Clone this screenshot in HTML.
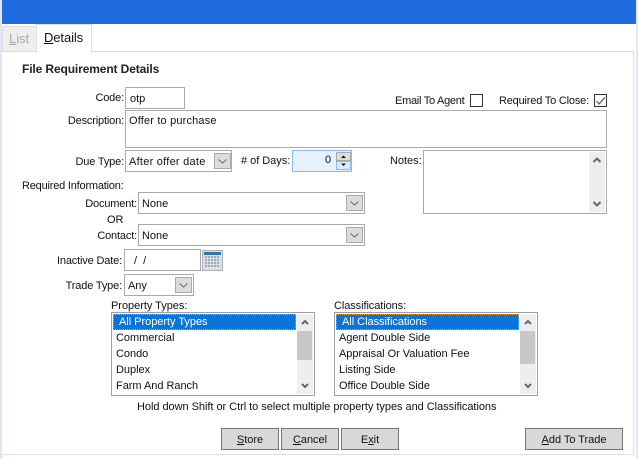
<!DOCTYPE html>
<html><head><meta charset="utf-8"><style>
html,body{margin:0;padding:0;background:#fff}
#p{position:relative;width:638px;height:459px;overflow:hidden;background:#fff;font:11px/14px "Liberation Sans",sans-serif;letter-spacing:-.03px;color:#111}
#p div{position:absolute;box-sizing:border-box}
.t{white-space:nowrap}
.r{text-align:right;letter-spacing:-.16px}
.b{border:1px solid #aaaaae;background:#fff}
.ar{background:#dcdcdc;border:1px solid #aaa;width:17px;height:16px}
.btn{background:#d8d8d8;border:1px solid #777;height:22px;text-align:center;line-height:22px}
.sel{background:#0a74da;color:#fff;outline:1px dotted #e8a040;outline-offset:-1px;height:16px;line-height:16px}
svg{position:absolute;display:block}
</style></head><body><div id="p">
<div style="left:0;top:0;width:2px;height:459px;background:#dfe5f2"></div>
<div style="left:636px;top:0;width:2px;height:459px;background:#dfe9f6"></div>
<div style="left:2px;top:0;width:634px;height:24px;background:#1f6bdd"></div>

<div style="left:2px;top:51px;width:632px;height:404px;border-right:1px solid #ddd;border-top:1px solid #ddd;border-bottom:1px solid #e2e2e2"></div>
<div style="left:2px;top:26px;width:35px;height:26px;background:#eee;border:1px solid #ddd"></div>
<div class="t" style="left:9px;top:32px;color:#a8a8a8;font-size:13px"><u>L</u>ist</div>
<div style="left:36px;top:24px;width:56px;height:29px;background:#fff;border:1px solid #ddd;border-bottom:0"></div>
<div class="t" style="left:44px;top:31px;font-size:13px;letter-spacing:-.1px"><u>D</u>etails</div>

<div class="t" style="left:22px;top:62px;font-size:12px;font-weight:bold;letter-spacing:-.12px;color:#222">File Requirement Details</div>

<div class="t r" style="left:60px;width:64px;top:91px">Code:</div>
<div class="b" style="left:125px;top:87px;width:60px;height:22px"></div>
<div class="t" style="left:130px;top:92px">otp</div>
<div class="t" style="left:395px;top:94px;letter-spacing:-.27px">Email To Agent</div>
<div style="left:470px;top:94px;width:13px;height:13px;border:1px solid #333"></div>
<div class="t" style="left:499px;top:94px;letter-spacing:-.19px">Required To Close:</div>
<div style="left:594px;top:94px;width:13px;height:13px;border:1px solid #333"></div>
<svg style="left:594px;top:94px" width="13" height="13"><path d="M2.5 7 L5 10 L11 3.5" fill="none" stroke="#666" stroke-width="1.3"/></svg>

<div class="t r" style="left:40px;width:84px;top:114px">Description:</div>
<div class="b" style="left:125px;top:110px;width:482px;height:38px"></div>
<div class="t" style="left:129px;top:114px;letter-spacing:.17px">Offer to purchase</div>

<div class="t r" style="left:60px;width:64px;top:155px">Due Type:</div>
<div class="b" style="left:125px;top:150px;width:107px;height:22px"></div>
<div class="t" style="left:129px;top:155px;letter-spacing:.25px">After offer date</div>
<div class="ar" style="left:214px;top:153px"></div>
<svg style="left:214px;top:153px" width="17" height="16"><path d="M4.5 6.5 L8.5 10 L12.5 6.5" fill="none" stroke="#666"/></svg>

<div class="t" style="left:241px;top:154px"># of Days:</div>
<div style="left:292px;top:150px;width:60px;height:22px;background:#e6f1fb;border:1px solid #85bdf0"></div>
<div class="t" style="left:325px;top:153px">0</div>
<div style="left:336px;top:152px;width:15px;height:9px;background:#dcdcdc;border:1px solid #aaa"></div>
<div style="left:336px;top:161px;width:15px;height:9px;background:#dcebf9;border:1px solid #85bdf0"></div>
<svg style="left:336px;top:152px" width="15" height="18"><path d="M5 6 H10 L7.5 3.5 Z M5 11.5 H10 L7.5 14 Z" fill="#111"/></svg>

<div class="t" style="left:390px;top:154px">Notes:</div>
<div class="b" style="left:423px;top:150px;width:184px;height:64px"></div>
<div style="left:589px;top:152px;width:16px;height:60px;background:#eee"></div>
<svg style="left:589px;top:152px" width="16" height="60"><path d="M4.5 10 L8 6.5 L11.5 10 M4.5 50 L8 53.5 L11.5 50" fill="none" stroke="#666" stroke-width="2"/></svg>

<div class="t" style="left:22px;top:179px;letter-spacing:-.2px">Required Information:</div>
<div class="t r" style="left:60px;width:77px;top:197px">Document:</div>
<div class="b" style="left:138px;top:192px;width:227px;height:22px"></div>
<div class="t" style="left:142px;top:197px">None</div>
<div class="ar" style="left:346px;top:195px"></div>
<svg style="left:346px;top:195px" width="17" height="16"><path d="M4.5 6.5 L8.5 10 L12.5 6.5" fill="none" stroke="#666"/></svg>
<div class="t" style="left:107px;top:213px">OR</div>
<div class="t r" style="left:60px;width:77px;top:229px">Contact:</div>
<div class="b" style="left:138px;top:224px;width:227px;height:22px"></div>
<div class="t" style="left:142px;top:229px">None</div>
<div class="ar" style="left:346px;top:227px"></div>
<svg style="left:346px;top:227px" width="17" height="16"><path d="M4.5 6.5 L8.5 10 L12.5 6.5" fill="none" stroke="#666"/></svg>

<div class="t r" style="left:40px;width:82px;top:254px">Inactive Date:</div>
<div class="b" style="left:124px;top:249px;width:77px;height:22px"></div>
<div class="t" style="left:134px;top:254px">/ &nbsp;/</div>
<svg style="left:202px;top:250px" width="21" height="21"><rect x=".5" y=".5" width="20" height="20" fill="#d8e2e6" stroke="#b0b0b0"/><rect x="2" y="2" width="17" height="3" fill="#2a78b8"/><path d="M3 7H18M3 10H18M3 13H18M3 16H18" stroke="#8a9aa0" stroke-width="1.4" stroke-dasharray="2 1"/></svg>

<div class="t r" style="left:40px;width:82px;top:279px">Trade Type:</div>
<div class="b" style="left:124px;top:274px;width:70px;height:22px"></div>
<div class="t" style="left:128px;top:279px">Any</div>
<div class="ar" style="left:175px;top:277px"></div>
<svg style="left:175px;top:277px" width="17" height="16"><path d="M4.5 6.5 L8.5 10 L12.5 6.5" fill="none" stroke="#666"/></svg>

<div class="t" style="left:111px;top:299px">Property Types:</div>
<div style="left:111px;top:312px;width:204px;height:84px;border:1px solid #a0a0a4"></div>
<div class="sel t" style="left:113px;top:314px;width:183px;padding-left:6px">All Property Types</div>
<div class="t" style="left:116px;top:331px">Commercial</div>
<div class="t" style="left:116px;top:347px">Condo</div>
<div class="t" style="left:116px;top:363px">Duplex</div>
<div class="t" style="left:116px;top:379px">Farm And Ranch</div>
<div style="left:297px;top:314px;width:16px;height:80px;background:#eee"></div>
<div style="left:297px;top:331px;width:15px;height:29px;background:#c8c8c8"></div>
<svg style="left:297px;top:314px" width="16" height="80"><path d="M5 10 L8 7 L11 10 M5 70 L8 73 L11 70" fill="none" stroke="#666" stroke-width="2"/></svg>

<div class="t" style="left:334px;top:299px;letter-spacing:-.08px">Classifications:</div>
<div style="left:334px;top:312px;width:204px;height:84px;border:1px solid #a0a0a4"></div>
<div class="sel t" style="left:336px;top:314px;width:183px;padding-left:6px">All Classifications</div>
<div class="t" style="left:339px;top:331px">Agent Double Side</div>
<div class="t" style="left:339px;top:347px">Appraisal Or Valuation Fee</div>
<div class="t" style="left:339px;top:363px">Listing Side</div>
<div class="t" style="left:339px;top:379px">Office Double Side</div>
<div style="left:520px;top:314px;width:16px;height:80px;background:#eee"></div>
<div style="left:520px;top:331px;width:15px;height:33px;background:#c8c8c8"></div>
<svg style="left:520px;top:314px" width="16" height="80"><path d="M5 10 L8 7 L11 10 M5 70 L8 73 L11 70" fill="none" stroke="#666" stroke-width="2"/></svg>

<div class="t" style="left:137px;top:400px;letter-spacing:-.04px">Hold down Shift or Ctrl to select multiple property types and Classifications</div>

<div class="btn" style="left:221px;top:428px;width:58px"><u>S</u>tore</div>
<div class="btn" style="left:281px;top:428px;width:58px"><u>C</u>ancel</div>
<div class="btn" style="left:341px;top:428px;width:58px">E<u>x</u>it</div>
<div class="btn" style="left:525px;top:428px;width:98px"><u>A</u>dd To Trade</div>
</div></body></html>
